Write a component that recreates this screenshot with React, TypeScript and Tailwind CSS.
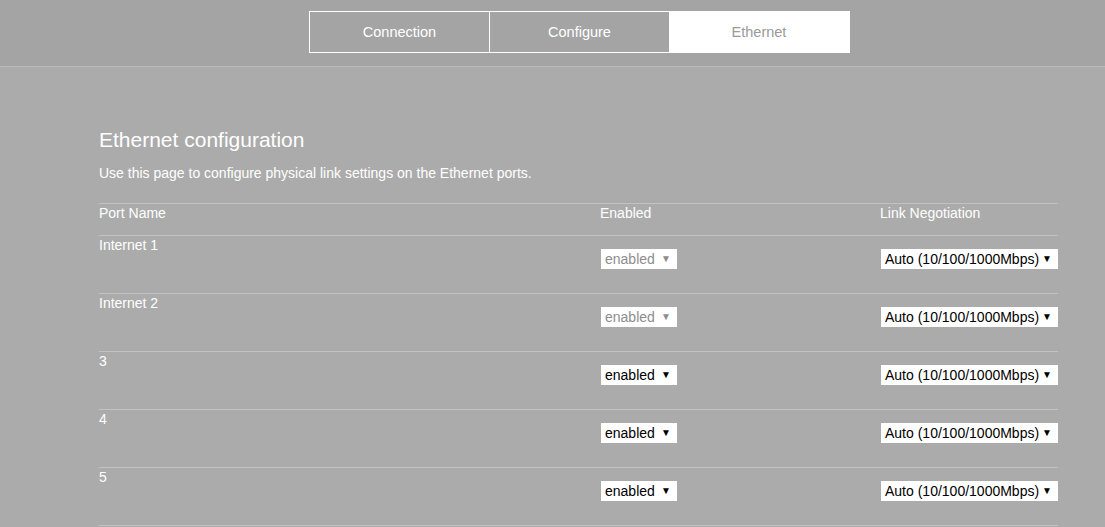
import React from "react";

const ports = [
  { name: "Internet 1", locked: true },
  { name: "Internet 2", locked: true },
  { name: "3", locked: false },
  { name: "4", locked: false },
  { name: "5", locked: false },
];

function Select({ label, locked, wide }: { label: string; locked?: boolean; wide?: boolean }) {
  return (
    <div
      className={`flex h-[20px] items-center justify-between bg-white pl-[4px] pr-[6px] text-[14px] leading-4 ${
        wide ? "w-[177px]" : "w-[76px]"
      } ${locked ? "text-[#8d8d8d]" : "text-black"}`}
    >
      <span>{label}</span>
      <span className="text-[10px]">▼</span>
    </div>
  );
}

export default function App() {
  return (
    <div className="min-h-[527px] bg-[#ababab] font-['Liberation_Sans',Arial,sans-serif] text-white">
      <header className="flex h-[67px] justify-center border-b border-[#bcbcbc] bg-[#a4a4a4] pl-[54px] pt-[11px]">
        <nav className="flex h-[42px] border border-white">
          <div className="flex w-[180px] items-center justify-center border-r border-white pt-px text-[14.5px]">Connection</div>
          <div className="flex w-[179px] items-center justify-center pt-px text-[14.5px]">Configure</div>
          <div className="flex w-[180px] items-center justify-center bg-white pt-px text-[14.5px] text-[#9a9a9a]">Ethernet</div>
        </nav>
      </header>

      <main className="mx-[99px] w-[959px] pt-[61px]">
        <h1 className="text-[21px] leading-6">Ethernet configuration</h1>
        <p className="mt-[13px] text-[14px] leading-4">
          Use this page to configure physical link settings on the Ethernet ports.
        </p>

        <div className="mt-[22px] border-t border-[#c2c2c2]">
          <div className="grid h-[32px] grid-cols-[501px_280px_1fr] border-b border-[#c2c2c2] pt-px text-[14px] leading-4">
            <span>Port Name</span>
            <span>Enabled</span>
            <span>Link Negotiation</span>
          </div>
          {ports.map((p) => (
            <div
              key={p.name}
              className="grid h-[58px] grid-cols-[501px_280px_1fr] border-b border-[#c2c2c2] text-[14px] leading-4"
            >
              <span className="pt-px">{p.name}</span>
              <div className="pl-px pt-[13px]">
                <Select label="enabled" locked={p.locked} />
              </div>
              <div className="pl-px pt-[13px]">
                <Select label="Auto (10/100/1000Mbps)" wide />
              </div>
            </div>
          ))}
        </div>
      </main>
    </div>
  );
}
